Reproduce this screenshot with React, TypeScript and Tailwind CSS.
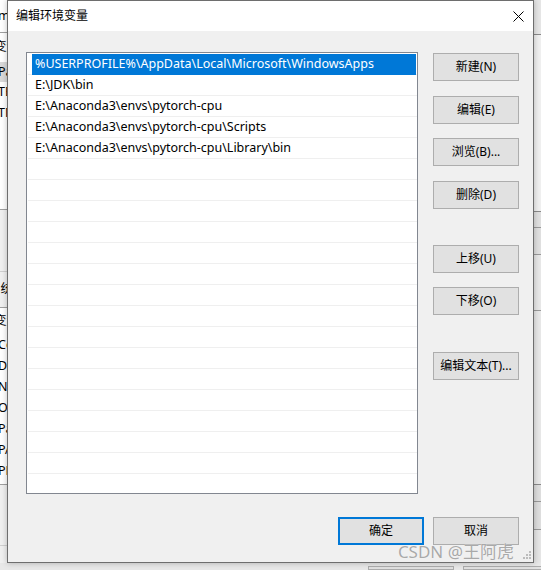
import React from "react";

const UI = "font-['Noto_Sans','Noto_Sans_CJK_SC',sans-serif]";

const paths = [
  "%USERPROFILE%\\AppData\\Local\\Microsoft\\WindowsApps",
  "E:\\JDK\\bin",
  "E:\\Anaconda3\\envs\\pytorch-cpu",
  "E:\\Anaconda3\\envs\\pytorch-cpu\\Scripts",
  "E:\\Anaconda3\\envs\\pytorch-cpu\\Library\\bin",
];

function WinButton({ label, className = "" }: { label: string; className?: string }) {
  return (
    <div
      className={`w-[86px] h-[28px] border border-[#adadad] bg-[#e1e1e1] flex items-center justify-center text-[12px] text-black ${className}`}
    >
      {label}
    </div>
  );
}

function BackWindowLeft() {
  const sysRows = ["ComSpec", "DriverData", "NUMBER_OF", "OS", "Path", "PATHEXT", "PROCESSOR"];
  return (
    <div className={`w-[40px] h-full flex flex-col text-[12.5px] text-black ${UI}`}>
      <div className="h-[33px] bg-white flex items-center -ml-[2px] border-b border-[#a0a0a0]">m</div>
      <div className="h-[29px] bg-white flex items-center -ml-[6px]">变量</div>
      <div className="h-[20px] bg-[#d9d9d9] flex items-center -ml-[2px]">Path</div>
      <div className="h-[21px] bg-white flex items-center -ml-[2px]">TEMP</div>
      <div className="h-[21px] bg-white flex items-center -ml-[2px]">TMP</div>
      <div className="h-[86px] bg-white border-b border-[#a0a0a0]" />
      <div className="h-[62px] border-b border-[#d0d0d0]" />
      <div className="h-[36px] flex items-center -ml-[12px] border-b border-[#a0a0a0]">系统变量</div>
      <div className="h-[27px] bg-white flex items-center -ml-[6px]">变量</div>
      {sysRows.map((r) => (
        <div key={r} className="h-[21px] bg-white flex items-center -ml-[2px]">
          {r}
        </div>
      ))}
      <div className="h-[3px] bg-white border-b border-[#a0a0a0]" />
      <div className="h-[61px] border-b border-[#d0d0d0]" />
      <div className="flex-1" />
    </div>
  );
}

function BackWindowRight() {
  return (
    <div className="w-[40px] h-full flex flex-col">
      <div className="h-[35px] bg-[#e6e6e6] border-b border-[#8a8a8a]" />
      <div className="h-[177px] bg-[#f0f0f0] border-b border-[#8a8a8a] flex pl-[1px] pt-[2px]">
        <div className="w-[3px] h-[44px] bg-[#cdcdcd]" />
      </div>
      <div className="h-[16px] bg-[#e0e0e0] border-b border-[#9a9a9a]" />
      <div className="h-[27px] bg-[#e0e0e0] border-b border-[#9a9a9a]" />
      <div className="h-[56px] bg-[#e8e8e8] border-b border-[#9a9a9a]" />
      <div className="h-[174px] bg-[#e8e8e8] border-b border-[#8a8a8a] flex pl-[3px] pt-[16px]">
        <div className="w-[4px] h-[60px] bg-[#c2c2c2]" />
      </div>
      <div className="h-[17px] bg-[#dedede] border-b border-[#9a9a9a]" />
      <div className="h-[28px] bg-[#dedede] border-b border-[#9a9a9a]" />
      <div className="flex-1 bg-[#e6e6e6]" />
    </div>
  );
}

function ResizeGrip() {
  const dots = [
    [6, 0],
    [3, 3],
    [6, 3],
    [0, 6],
    [3, 6],
    [6, 6],
  ];
  return (
    <svg width="8" height="8" viewBox="0 0 8 8" className="block">
      {dots.map(([x, y]) => (
        <rect key={`${x}-${y}`} x={x} y={y} width="2" height="2" fill="#bcbcbc" />
      ))}
    </svg>
  );
}

function EditDialog() {
  return (
    <div
      className={`absolute left-[7px] top-0 w-[527px] h-[563px] border border-[#6e6e6e] bg-[#f0f0f0] shadow-[0_0_6px_rgba(0,0,0,0.25)] flex flex-col ${UI}`}
    >
      {/* title bar */}
      <div className="h-[30px] bg-white flex items-center justify-between pl-[8px] pr-[9px]">
        <span className="text-[12px] text-black">编辑环境变量</span>
        <svg width="11" height="11" viewBox="0 0 11 11" className="block">
          <path d="M0.5 0.5 L10.5 10.5 M10.5 0.5 L0.5 10.5" stroke="#000" strokeWidth="1" />
        </svg>
      </div>

      {/* body */}
      <div className="flex-1 flex flex-col pl-[18px] pr-[14px] pt-[21px] pb-[17px]">
        <div className="flex gap-[15px]">
          {/* path list */}
          <div className="w-[392px] h-[442px] border border-[#828790] bg-white pt-[1px] pl-[1px] overflow-hidden">
            {Array.from({ length: 20 }).map((_, i) => {
              const text = paths[i];
              const selected = i === 0;
              return (
                <div key={i} className="h-[21px] border-b border-[#efefef] flex">
                  {selected ? (
                    <div className="ml-[4px] w-[384px] h-[21px] bg-[#0078d7] text-white text-[12.5px] flex items-center pl-[3px] whitespace-nowrap">
                      {text}
                    </div>
                  ) : (
                    <div className="pl-[7px] text-[12.5px] text-black flex items-center whitespace-nowrap">
                      {text ?? ""}
                    </div>
                  )}
                </div>
              );
            })}
          </div>

          {/* action buttons */}
          <div className="flex flex-col">
            <WinButton label="新建(N)" className="mt-[1px]" />
            <WinButton label="编辑(E)" className="mt-[15px]" />
            <WinButton label="浏览(B)..." className="mt-[14px]" />
            <WinButton label="删除(D)" className="mt-[15px]" />
            <WinButton label="上移(U)" className="mt-[36px]" />
            <WinButton label="下移(O)" className="mt-[14px]" />
            <WinButton label="编辑文本(T)..." className="mt-[37px]" />
          </div>
        </div>

        {/* dialog buttons */}
        <div className="mt-[23px] flex justify-end gap-[9px]">
          <div className="w-[86px] h-[28px] border-2 border-[#0078d7] bg-[#e1e1e1] flex items-center justify-center text-[12px] text-black">
            确定
          </div>
          <WinButton label="取消" />
        </div>
      </div>

      {/* watermark and size grip */}
      <div className="absolute right-[19px] bottom-[0px] text-[17px] leading-[21px] text-[#a9a9a9] font-['Noto_Sans','Noto_Sans_CJK_SC',sans-serif] [text-shadow:0_0_1px_#ffffff]">
        CSDN @王阿虎
      </div>
      <div className="absolute right-[2px] bottom-[3px]">
        <ResizeGrip />
      </div>
    </div>
  );
}

export default function App() {
  return (
    <div className="relative w-[541px] h-[570px] overflow-hidden bg-[#f0f0f0]">
      {/* window underneath */}
      <div className="flex flex-col w-full h-full">
        <div className="h-[563px] flex">
          <BackWindowLeft />
          <div className="flex-1" />
          <BackWindowRight />
        </div>
        <div className="flex-1 flex pt-[3px] pl-[368px] gap-[9px] bg-[#e8e8e8]">
          <div className="w-[86px] shrink-0 border border-[#adadad] bg-[#e1e1e1]" />
          <div className="w-[86px] shrink-0 border border-[#adadad] bg-[#e1e1e1]" />
        </div>
      </div>
      <EditDialog />
    </div>
  );
}
